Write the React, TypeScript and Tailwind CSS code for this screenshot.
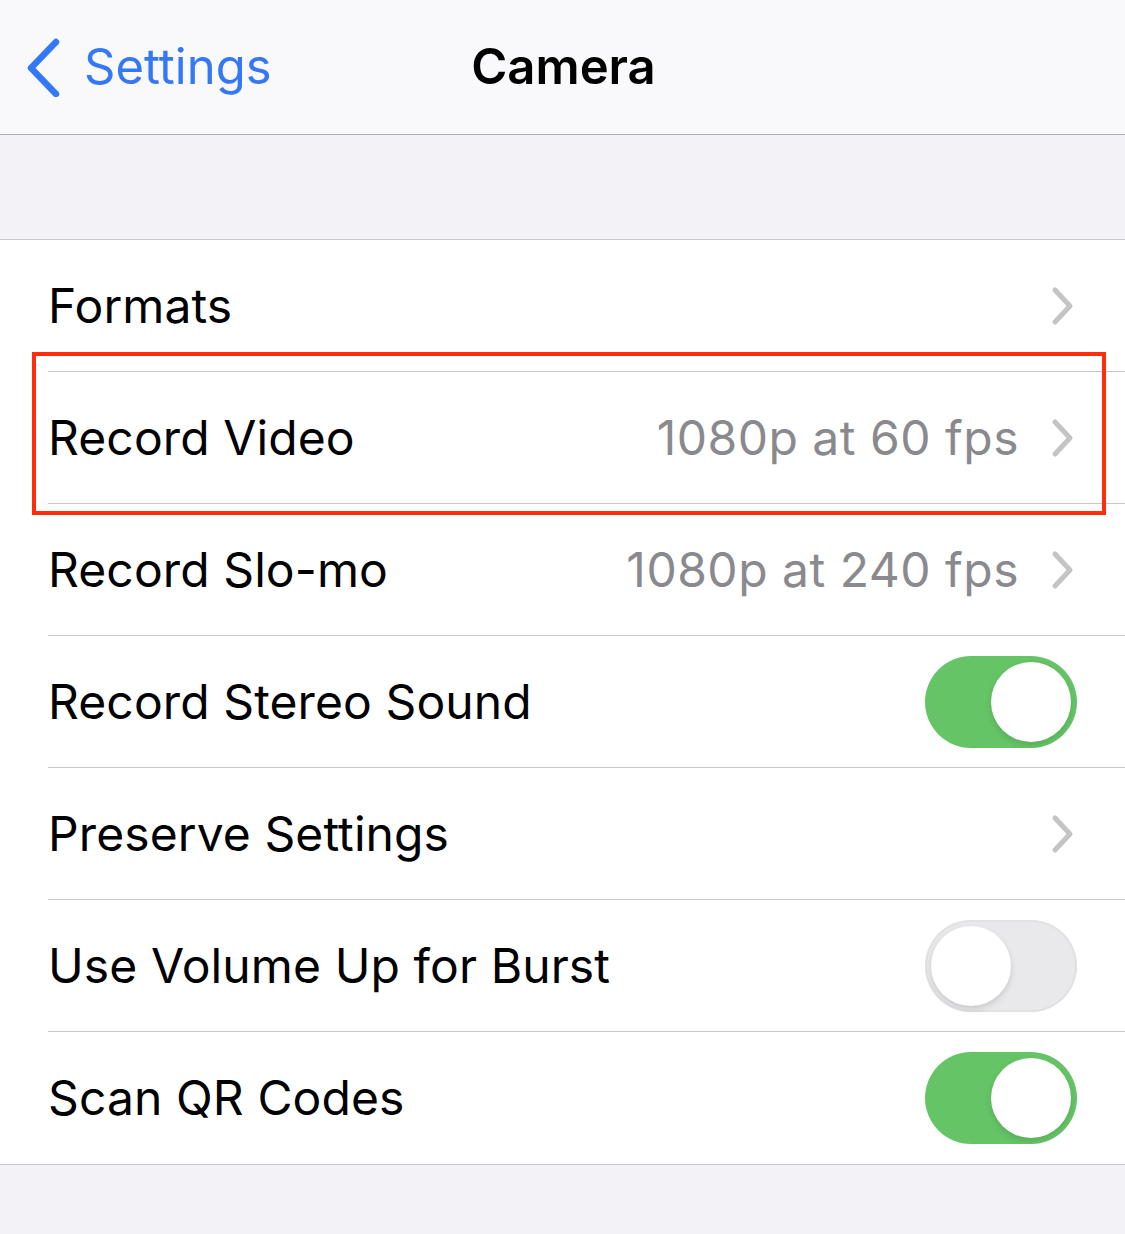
import React from "react";

function Chevron() {
  return (
    <svg width="24" height="40" viewBox="0 0 24 40" className="shrink-0">
      <path d="M4 4 L19 20 L4 36" fill="none" stroke="#c4c4c7" strokeWidth="5" strokeLinecap="round" strokeLinejoin="round" />
    </svg>
  );
}

function Toggle({ on }: { on: boolean }) {
  if (on) {
    return (
      <div className="w-[152px] h-[92px] rounded-full bg-[#65c466] flex items-center justify-end pr-[6px]">
        <div className="w-[80px] h-[80px] rounded-full bg-white shadow-[0_3px_6px_rgba(0,0,0,0.12)]" />
      </div>
    );
  }
  return (
    <div className="w-[152px] h-[92px] rounded-full bg-[#e9e9eb] flex items-center justify-start pl-[6px] shadow-[inset_0_0_0_2px_#e1e1e3]">
      <div className="w-[80px] h-[80px] rounded-full bg-white shadow-[0_3px_6px_rgba(0,0,0,0.14)]" />
    </div>
  );
}

type Row = { label: string; value?: string; chevron?: boolean; toggle?: boolean };

const rows: Row[] = [
  { label: "Formats", chevron: true },
  { label: "Record Video", value: "1080p at 60 fps", chevron: true },
  { label: "Record Slo-mo", value: "1080p at 240 fps", chevron: true },
  { label: "Record Stereo Sound", toggle: true },
  { label: "Preserve Settings", chevron: true },
  { label: "Use Volume Up for Burst", toggle: false },
  { label: "Scan QR Codes", toggle: true },
];

export default function App() {
  return (
    <div
      className="w-[1125px] h-[1234px] bg-[#f2f2f7] relative overflow-hidden"
      style={{ fontFamily: "Inter, 'Noto Sans', sans-serif" }}
    >
      <div className="h-[135px] bg-[#f9f9fb] border-b border-[#b2b2b6] relative flex items-center">
        <div className="flex items-center pl-[23px] gap-[21px]">
          <svg width="40" height="60" viewBox="0 0 40 60">
            <path d="M33 5 L8 31 L33 57" fill="none" stroke="#3478f6" strokeWidth="6.5" strokeLinecap="round" strokeLinejoin="round" />
          </svg>
          <span className="text-[49px] text-[#3478f6] tracking-[0px] leading-none mb-[2px]">Settings</span>
        </div>
        <div className="absolute left-0 right-0 top-0 h-[135px] flex items-center justify-center pointer-events-none">
          <span className="text-[49px] font-semibold text-black leading-none mb-[2px] ml-[2px]">Camera</span>
        </div>
      </div>
      <div className="h-[104px]" />
      <div className="bg-white border-t border-b border-[#c8c7cc]">
        {rows.map((r, i) => (
          <div key={r.label} className="pl-[48px]">
            <div
              className={
                "h-[132px] flex items-center pr-[48px] " +
                (i < rows.length - 1 ? "border-b border-[#c8c7cc]" : "")
              }
            >
              <span className="text-[48px] text-black leading-none flex-1 tracking-[0.1px]">{r.label}</span>
              {r.value && (
                <span className="text-[48px] text-[#8a8a8e] leading-none mr-[32px] tracking-[0.5px]">{r.value}</span>
              )}
              {r.chevron && <div className="mr-[2px]"><Chevron /></div>}
              {r.toggle !== undefined && <Toggle on={r.toggle} />}
            </div>
          </div>
        ))}
      </div>
      <div className="absolute left-[32px] top-[352px] w-[1074px] h-[163px] border-[4px] border-[#ff2d0d]" />
    </div>
  );
}
